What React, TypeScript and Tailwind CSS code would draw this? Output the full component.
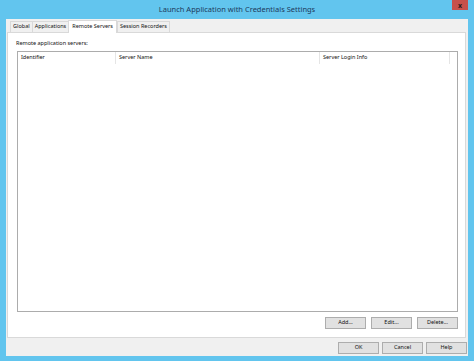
import React from "react";

const font = { fontFamily: '"Noto Sans", "Open Sans", sans-serif' };

function WinButton({ label }: { label: string }) {
  return (
    <div className="w-[41px] h-[12px] bg-[#e1e1e1] border border-[#adadad] flex items-center justify-center text-[5.5px] text-[#111] leading-none">
      {label}
    </div>
  );
}

export default function App() {
  const tabs = ["Global", "Applications", "Remote Servers", "Session Recorders"];
  const active = 2;

  return (
    <div className="w-[474px] h-[361px] bg-[#62c5ee] flex flex-col overflow-hidden" style={font}>
      {/* Title bar */}
      <div className="relative h-[19px] shrink-0 flex items-center justify-center">
        <span className="text-[7.5px] text-[#1d3a5c] leading-none">
          Launch Application with Credentials Settings
        </span>
        <div className="absolute right-[6px] top-0 w-[16px] h-[10px] bg-[#c7504a] flex items-center justify-center text-[7px] font-bold text-[#2a1a1a] leading-none">
          x
        </div>
      </div>

      {/* Window body */}
      <div className="mx-[6px] mb-[5px] flex-1 bg-[#f0f0f0] flex flex-col">
        {/* Tabs */}
        <div className="h-[13px] mt-[1px] pl-[4px] flex items-start shrink-0">
          {tabs.map((t, i) =>
            i === active ? (
              <div
                key={t}
                className="relative z-10 h-[13px] px-[3px] bg-white border border-b-0 border-[#d9d9d9] text-[5.5px] text-[#111] leading-none flex items-center"
              >
                {t}
              </div>
            ) : (
              <div
                key={t}
                className="mt-[1px] h-[11px] px-[2px] bg-[#f0f0f0] border border-[#d9d9d9] border-b-0 -mr-[1px] text-[5.5px] text-[#111] leading-none flex items-center"
              >
                {t}
              </div>
            )
          )}
        </div>

        {/* Tab panel */}
        <div className="ml-[1px] mr-[2px] -mt-[1px] h-[306px] bg-white border border-[#d9d9d9] flex flex-col px-[8px]">
          <div className="mt-[6px] h-[9px] text-[5.5px] text-[#111] leading-none flex items-center">
            Remote application servers:
          </div>
          <div className="mt-[3px] ml-[1px] mr-[-1px] h-[261px] border border-[#acacac] bg-white flex flex-col">
            <div className="h-[12px] flex text-[5.5px] text-[#111] leading-none">
              <div className="w-[98px] flex items-center pl-[3px] border-r border-[#e5e5e5]">Identifier</div>
              <div className="w-[204px] flex items-center pl-[3px] border-r border-[#e5e5e5]">Server Name</div>
              <div className="w-[130px] flex items-center pl-[3px] border-r border-[#e5e5e5]">Server Login Info</div>
              <div className="flex-1" />
            </div>
          </div>
          <div className="mt-[5px] flex justify-end gap-[5px] mr-[-1px]">
            <WinButton label="Add..." />
            <WinButton label="Edit..." />
            <WinButton label="Delete..." />
          </div>
        </div>

        {/* Dialog buttons */}
        <div className="mt-[4px] flex justify-end gap-[3px] pr-[1px]">
          <WinButton label="OK" />
          <WinButton label="Cancel" />
          <WinButton label="Help" />
        </div>
      </div>
    </div>
  );
}
